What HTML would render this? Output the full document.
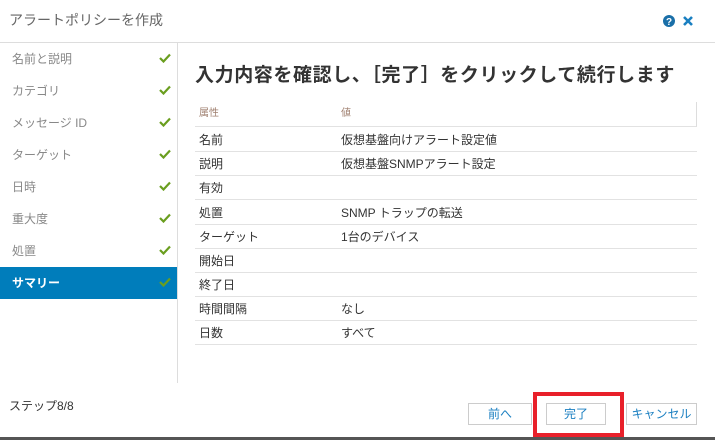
<!DOCTYPE html>
<html><head><meta charset="utf-8"><style>
*{margin:0;padding:0;box-sizing:border-box}
body{width:715px;height:440px;background:#fff;font-family:"Liberation Sans","Noto Sans CJK JP",sans-serif;position:relative;overflow:hidden;color:#333}
.a{position:absolute}
.title{left:9px;top:10px;font-size:14px;color:#666}
.hr{left:0;top:42px;width:715px;height:1px;background:#ddd}
.vr{left:177px;top:43px;width:1px;height:340px;background:#ddd}
.nav{left:0;width:177px;height:32px;font-size:12px;color:#888;padding-left:12px;line-height:32px}
.nav.on{background:#007dbb;color:#fff;font-weight:bold}
.ck{position:absolute;right:6px;top:10px}
h1{position:absolute;left:195px;top:60px;font-size:19px;letter-spacing:0.6px;font-weight:bold;color:#333;white-space:nowrap}
.row{left:195px;width:502px;height:24px;border-bottom:1px solid #e2e2e2;font-size:12px;line-height:24px;color:#333;padding-left:4px}
.row span{position:absolute;left:146px}
.hd{color:#a08070;font-size:10px;border-right:1px solid #ddd;height:25px}
.btn{top:403px;height:22px;border:1px solid #ccc;font-size:12px;color:#1a7fc1;text-align:center;line-height:20px;background:#fff}
</style></head><body>
<div class="a title">アラートポリシーを作成</div>
<svg class="a" style="left:663px;top:15px" width="12" height="12"><circle cx="6" cy="6" r="6" fill="#1a6fa8"/><text x="6" y="10" font-size="10" font-weight="bold" fill="#fff" text-anchor="middle" font-family="Liberation Sans">?</text></svg>
<svg class="a" style="left:682px;top:15px" width="12" height="12"><path d="M2 2L10 10M10 2L2 10" stroke="#1a7fc1" stroke-width="2.6"/></svg>
<div class="a hr"></div>
<div class="a vr"></div>
<div class="a nav" style="top:43px">名前と説明<svg class="ck" width="12" height="10"><path d="M1 5L4.5 8.5L11 1.5" stroke="#6a9e1f" stroke-width="2.2" fill="none"/></svg></div>
<div class="a nav" style="top:75px">カテゴリ<svg class="ck" width="12" height="10"><path d="M1 5L4.5 8.5L11 1.5" stroke="#6a9e1f" stroke-width="2.2" fill="none"/></svg></div>
<div class="a nav" style="top:107px">メッセージ ID<svg class="ck" width="12" height="10"><path d="M1 5L4.5 8.5L11 1.5" stroke="#6a9e1f" stroke-width="2.2" fill="none"/></svg></div>
<div class="a nav" style="top:139px">ターゲット<svg class="ck" width="12" height="10"><path d="M1 5L4.5 8.5L11 1.5" stroke="#6a9e1f" stroke-width="2.2" fill="none"/></svg></div>
<div class="a nav" style="top:171px">日時<svg class="ck" width="12" height="10"><path d="M1 5L4.5 8.5L11 1.5" stroke="#6a9e1f" stroke-width="2.2" fill="none"/></svg></div>
<div class="a nav" style="top:203px">重大度<svg class="ck" width="12" height="10"><path d="M1 5L4.5 8.5L11 1.5" stroke="#6a9e1f" stroke-width="2.2" fill="none"/></svg></div>
<div class="a nav" style="top:235px">処置<svg class="ck" width="12" height="10"><path d="M1 5L4.5 8.5L11 1.5" stroke="#6a9e1f" stroke-width="2.2" fill="none"/></svg></div>
<div class="a nav on" style="top:267px">サマリー<svg class="ck" width="12" height="10"><path d="M1 5L4.5 8.5L11 1.5" stroke="#6a9e1f" stroke-width="2.2" fill="none"/></svg></div>
<h1>入力内容を確認し、［完了］をクリックして続行します</h1>
<div class="a row hd" style="top:102px">属性<span>値</span></div>
<div class="a row" style="top:128px">名前<span>仮想基盤向けアラート設定値</span></div>
<div class="a row" style="top:152px">説明<span>仮想基盤SNMPアラート設定</span></div>
<div class="a row" style="top:176px">有効<span></span></div>
<div class="a row" style="top:201px">処置<span>SNMP トラップの転送</span></div>
<div class="a row" style="top:225px">ターゲット<span>1台のデバイス</span></div>
<div class="a row" style="top:249px">開始日<span></span></div>
<div class="a row" style="top:273px">終了日<span></span></div>
<div class="a row" style="top:297px">時間間隔<span>なし</span></div>
<div class="a row" style="top:321px">日数<span>すべて</span></div>
<div class="a" style="left:9px;top:397px;font-size:12px;color:#333">ステップ8/8</div>
<div class="a btn" style="left:468px;width:64px">前へ</div>
<div class="a btn" style="left:546px;width:60px">完了</div>
<div class="a btn" style="left:626px;width:71px">キャンセル</div>
<div class="a" style="left:533px;top:392px;width:91px;height:45px;border:4px solid #e8202a"></div>
<div class="a" style="left:0;top:437px;width:715px;height:3px;background:#555"></div>
</body></html>
